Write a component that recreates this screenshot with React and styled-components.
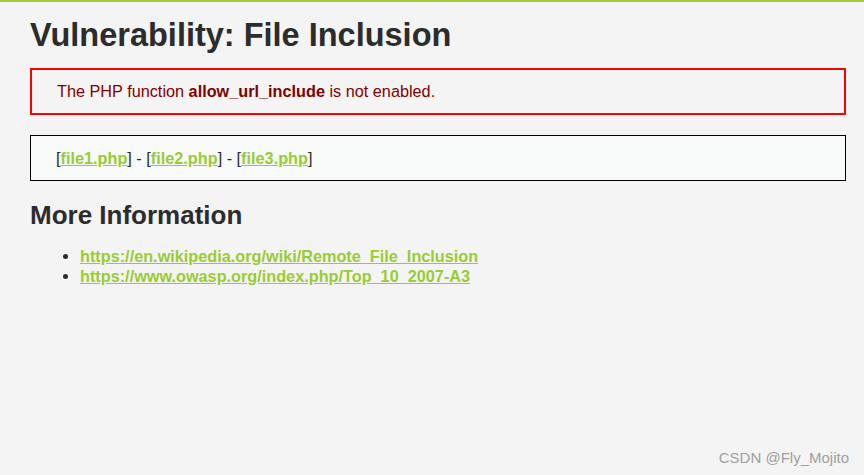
import React from "react";
import styled, { createGlobalStyle } from "styled-components";

const Global = createGlobalStyle`
  html, body { margin: 0; padding: 0; }
  body {
    background: #f4f4f4;
    font-family: "Liberation Sans", Arial, sans-serif;
    color: #2c2c2c;
    width: 864px;
    height: 475px;
    overflow: hidden;
  }
`;

const Page = styled.div`
  position: relative;
  height: 475px;
  border-top: 2px solid #a2cb3c;
  box-sizing: border-box;
  padding: 0 18px 0 30px;
`;

const Title = styled.h1`
  margin: 0;
  padding-top: 13px;
  font-size: 32.5px;
  line-height: 40px;
  font-weight: bold;
  color: #2c2c2c;
`;

const Warning = styled.div`
  margin-top: 13px;
  height: 47px;
  box-sizing: border-box;
  border: 2px solid #ff0000;
  display: flex;
  align-items: center;
  padding-left: 25px;
  font-size: 16.25px;
  color: #800000;
`;

const CodeArea = styled.div`
  margin-top: 20px;
  height: 46px;
  box-sizing: border-box;
  border: 1px solid #000;
  background: #f8f9f9;
  display: flex;
  align-items: center;
  padding-left: 25px;
  font-size: 16.25px;
  color: #2c2c2c;
`;

const Link = styled.a`
  color: #99cc33;
  font-weight: bold;
  text-decoration: underline;
`;

const SubTitle = styled.h2`
  margin: 0;
  margin-top: 19px;
  font-size: 26px;
  line-height: 30px;
  font-weight: bold;
  color: #2c2c2c;
`;

const List = styled.ul`
  margin: 16px 0 0;
  padding-left: 50px;
  font-size: 16.25px;
  line-height: 20px;
`;

const Watermark = styled.div`
  position: absolute;
  right: 15px;
  bottom: 9px;
  font-size: 15px;
  color: #a0a0a0;
  font-family: "Liberation Sans", Arial, sans-serif;
`;

export default function App() {
  return (
    <>
      <Global />
      <Page>
        <Title>Vulnerability: File Inclusion</Title>
        <Warning>
          <span>
            The PHP function <b>allow_url_include</b> is not enabled.
          </span>
        </Warning>
        <CodeArea>
          <span>
            [<Link href="#">file1.php</Link>] - [<Link href="#">file2.php</Link>] - [
            <Link href="#">file3.php</Link>]
          </span>
        </CodeArea>
        <SubTitle>More Information</SubTitle>
        <List>
          <li>
            <Link href="#">https://en.wikipedia.org/wiki/Remote_File_Inclusion</Link>
          </li>
          <li>
            <Link href="#">https://www.owasp.org/index.php/Top_10_2007-A3</Link>
          </li>
        </List>
        <Watermark>CSDN @Fly_Mojito</Watermark>
      </Page>
    </>
  );
}
